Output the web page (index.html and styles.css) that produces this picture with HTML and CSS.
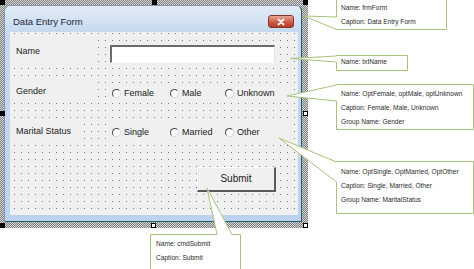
FILE: index.html
```html
<!DOCTYPE html>
<html>
    <head>
        <meta charset="utf-8">
        <title>Data Entry Form</title>
        <link rel="stylesheet" href="styles.css">
    </head>
    <body>
        <div class="canvas">
            <div class="selection">
                <div class="window">
                    <div class="titlebar">
                        <span class="title">Data Entry Form</span>
                        <span class="close">
                            <svg width="10" height="8" viewBox="0 0 10 8"><path d="M2.5 1.5 L7.5 6.5 M7.5 1.5 L2.5 6.5" stroke="#fff" stroke-width="1.8" stroke-linecap="round"/></svg>
                        </span>
                    </div>
                    <div class="client">
                        <div class="row row-name">
                            <div class="lbl">Name</div>
                            <div class="textbox"></div>
                        </div>
                        <div class="row row-gender">
                            <div class="lbl">Gender</div>
                            <div class="opts">
                                <div class="opt opt1"><i class="radio"></i>Female</div>
                                <div class="opt opt2"><i class="radio"></i>Male</div>
                                <div class="opt opt3"><i class="radio"></i>Unknown</div>
                            </div>
                        </div>
                        <div class="row row-marital">
                            <div class="lbl">Marital Status</div>
                            <div class="opts">
                                <div class="opt opt1"><i class="radio"></i>Single</div>
                                <div class="opt opt2"><i class="radio"></i>Married</div>
                                <div class="opt opt3"><i class="radio"></i>Other</div>
                            </div>
                        </div>
                        <div class="row row-submit">
                            <div class="btn">Submit</div>
                        </div>
                    </div>
                </div>
                <span class="handle h-tl"></span>
                <span class="handle h-tm"></span>
                <span class="handle h-tr"></span>
                <span class="handle h-ml"></span>
                <span class="handle h-mr open"></span>
                <span class="handle h-bl"></span>
                <span class="handle h-bm open"></span>
                <span class="handle h-br open"></span>
            </div>

            <!-- callout shapes -->
            <svg class="callouts" width="474" height="269" viewBox="0 0 474 269">
                <g fill="#fff" stroke="#a8c47c" stroke-width="1">
                    <polygon points="336.5,-5 446.5,-5 446.5,29.5 336.5,29.5 304,16 336.5,17"/>
                    <polygon points="336.5,55.5 407.5,55.5 407.5,70.5 336.5,70.5 336.5,62 290,58.5 336.5,56"/>
                    <polygon points="336.5,84.5 473.5,84.5 473.5,129.5 336.5,129.5 336.5,101 287,96 336.5,85"/>
                    <polygon points="336.5,161.5 473.5,161.5 473.5,213.5 336.5,213.5 336.5,182 279,138 336.5,162"/>
                    <polygon points="150.5,234.5 217,234.5 207,188 232,234.5 240.5,234.5 240.5,275 150.5,275"/>
                </g>
            </svg>

            <div class="note note-form">
                <p>Name: frmForm</p>
                <p>Caption: Data Entry Form</p>
            </div>
            <div class="note note-text">
                <p>Name: txtName</p>
            </div>
            <div class="note note-gender">
                <p>Name: OptFemale, optMale, optUnknown</p>
                <p>Caption: Female, Male, Unknown</p>
                <p>Group Name: Gender</p>
            </div>
            <div class="note note-marital">
                <p>Name: OptSingle, OptMarried, OptOther</p>
                <p>Caption: Single, Married, Other</p>
                <p>Group Name: MaritalStatus</p>
            </div>
            <div class="note note-submit">
                <p>Name: cmdSubmit</p>
                <p>Caption: Submit</p>
            </div>
        </div>
    </body>
</html>
```

FILE: styles.css
```css
*{
    margin: 0;
    padding: 0;
    box-sizing: border-box;
}
body{
    background-color: #fff;
    font-family: 'Liberation Sans', Arial, sans-serif;
    overflow: hidden;
}
.canvas{
    position: relative;
    width: 474px;
    height: 269px;
    overflow: hidden;
}
/* designer selection frame */
.selection{
    position: absolute;
    left: 0;
    top: 0;
    width: 308px;
    height: 228px;
    padding: 5px 6px 6px 4px;
    background: repeating-conic-gradient(#7e7e7e 0 25%, #d6d6d6 0 50%) 0 0 / 2px 2px;
}
.handle{
    position: absolute;
    width: 5px;
    height: 5px;
    background-color: #000;
    border: 1px solid #000;
}
.handle.open{
    background-color: #fff;
}
.h-tl{ left: 0; top: 0; }
.h-tm{ left: 152px; top: 0; }
.h-tr{ left: 303px; top: 0; }
.h-ml{ left: 0; top: 111px; }
.h-mr{ left: 303px; top: 111px; }
.h-bl{ left: 0; top: 223px; }
.h-bm{ left: 151px; top: 223px; }
.h-br{ left: 303px; top: 223px; }

.window{
    width: 298px;
    height: 217px;
    border: 1px solid #7f99ba;
    border-right-color: #1f5e6c;
    border-bottom-color: #1f5e6c;
    border-radius: 6px 6px 0 0;
    background: linear-gradient(#e3ecf7, #c7d9ef 26px, #bcd2ee);
    display: flex;
    flex-direction: column;
}
.titlebar{
    height: 26px;
    display: flex;
    align-items: center;
    justify-content: space-between;
    padding: 5px 7px 0 8px;
}
.title{
    font-size: 9.5px;
    color: #1b2740;
}
.close{
    width: 26px;
    height: 13px;
    border: 1px solid #84352b;
    border-radius: 3px;
    background: linear-gradient(#eaa593, #d0604d 50%, #b73a28);
    display: flex;
    align-items: center;
    justify-content: center;
}
.client{
    height: 183px;
    margin: 0 3px 0 5px;
    background-color: #f0f0f0;
    background-image: radial-gradient(circle at 4.5px 1.5px, #777 0.6px, transparent 1px);
    background-size: 7px 7px;
    overflow: hidden;
    color: #222;
    font-size: 9px;
}
.row{
    display: flex;
}
.lbl{
    background-color: #f0f0f0;
    padding-left: 6px;
}
.row-name{
    margin-top: 8px;
    height: 23px;
}
.row-name .lbl{
    width: 86px;
    line-height: 23px;
}
.textbox{
    margin: 5px 0 0 14px;
    width: 165px;
    height: 18px;
    background-color: #fff;
    border-top: 2px solid #6b6b6b;
    border-left: 2px solid #6b6b6b;
    border-right: 1px solid #e4e4e4;
    border-bottom: 1px solid #fafafa;
}
.row-gender{
    margin-top: 17px;
    height: 22px;
}
.row-gender .lbl{
    width: 86px;
    line-height: 22px;
}
.row-gender .opts{
    margin-left: 14px;
    padding-top: 4px;
}
.row-marital{
    margin-top: 18px;
    height: 22px;
}
.row-marital .lbl{
    width: 74px;
    line-height: 22px;
}
.row-marital .opts{
    margin-left: 26px;
    padding-top: 3px;
}
.opts{
    display: flex;
}
.opt{
    height: 18px;
    display: flex;
    align-items: center;
    gap: 3px;
    padding-left: 2px;
    background-color: #f0f0f0;
}
.opt1{ width: 58px; }
.opt2{ width: 55px; }
.opt3{ width: 66px; }
.radio{
    width: 9px;
    height: 9px;
    border-radius: 50%;
    background-color: #fff;
    border: 1px solid #d8d8d8;
    border-top-color: #4a4a4a;
    border-left-color: #4a4a4a;
}
.row-submit{
    margin: 25px 0 0 187px;
}
.btn{
    width: 79px;
    height: 25px;
    line-height: 22px;
    text-align: center;
    font-size: 10px;
    background-color: #f0f0f0;
    border-top: 1px solid #fff;
    border-left: 1px solid #fff;
    border-right: 2px solid #5a5a5a;
    border-bottom: 2px solid #5a5a5a;
}

/* callouts */
.callouts{
    position: absolute;
    left: 0;
    top: 0;
}
.note{
    position: absolute;
    font-family: 'Liberation Sans', Arial, sans-serif;
    font-size: 6.6px;
    color: #2a2a2a;
    white-space: nowrap;
}
.note p{
    height: 14px;
    line-height: 14px;
}
.note-form{ left: 341px; top: 1px; }
.note-text{ left: 341px; top: 55px; }
.note-gender{ left: 341px; top: 87px; }
.note-marital{ left: 341px; top: 165px; }
.note-submit{ left: 156px; top: 237px; }
```
